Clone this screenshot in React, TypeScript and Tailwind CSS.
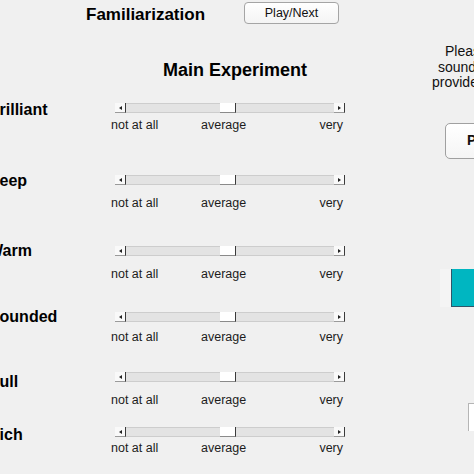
import React from "react";

type Row = {
  name: string;
  top: number; // margin above the slider
  labelShift: string; // negative margin on the bold label
  tickGap: string; // space between slider and tick labels
};

const ROWS: Row[] = [
  { name: "Brilliant", top: 22, labelShift: "-mt-[3px]", tickGap: "mt-[5px]" },
  { name: "Deep", top: 43, labelShift: "-mt-[4px]", tickGap: "mt-[11px]" },
  { name: "Warm", top: 36, labelShift: "-mt-[5px]", tickGap: "mt-[11px]" },
  { name: "Rounded", top: 31, labelShift: "-mt-[5px]", tickGap: "mt-[8px]" },
  { name: "Dull", top: 28, labelShift: "mt-0", tickGap: "mt-[11px]" },
  { name: "Rich", top: 20, labelShift: "-mt-[2px]", tickGap: "mt-[4px]" },
];

const ROW_TOPS: Record<number, string> = {
  22: "mt-[22px]",
  43: "mt-[43px]",
  36: "mt-[36px]",
  31: "mt-[31px]",
  28: "mt-[28px]",
  20: "mt-[20px]",
};

function Arrow({ dir }: { dir: "left" | "right" }) {
  return (
    <div className="flex h-[10px] w-[11px] shrink-0 items-center justify-center border-b border-r border-b-[#9a9a9a] border-r-[#3a3a3a] bg-[#f9f9f9]">
      <svg width="3" height="4" viewBox="0 0 3 4">
        {dir === "left" ? (
          <polygon points="3,0 0,2 3,4" fill="#222" />
        ) : (
          <polygon points="0,0 3,2 0,4" fill="#222" />
        )}
      </svg>
    </div>
  );
}

function Slider() {
  return (
    <div className="flex h-[10px] w-[230px]">
      <Arrow dir="left" />
      {/* track: left part, thumb, right part */}
      <div className="flex flex-1 border-y border-[#cdcdcd] bg-[#e3e3e3]">
        <div className="w-[94px]" />
        <div className="-my-px w-[16px] border-b border-r border-b-[#8a8a8a] border-r-[#3a3a3a] bg-white" />
        <div className="flex-1" />
      </div>
      <Arrow dir="right" />
    </div>
  );
}

function RatingRow({ row }: { row: Row }) {
  return (
    <div className={`flex items-start ${ROW_TOPS[row.top]}`}>
      <div
        className={`-ml-[12px] w-[127px] shrink-0 text-[16px] font-bold leading-[20px] text-black ${row.labelShift}`}
      >
        {row.name}
      </div>
      <div className="flex flex-col">
        <Slider />
        <div
          className={`-ml-[4px] flex w-[232px] text-[12.5px] leading-[14px] text-[#1c1c1c] ${row.tickGap}`}
        >
          <span className="w-[90px]">not at all</span>
          <span>average</span>
          <span className="ml-auto">very</span>
        </div>
      </div>
    </div>
  );
}

export default function App() {
  return (
    <div
      className="flex h-[474px] w-[474px] overflow-hidden bg-[#f0f0f0] text-black"
      style={{ fontFamily: '"Liberation Sans", Arial, Helvetica, sans-serif' }}
    >
      {/* Left: experiment panel */}
      <div className="flex w-[360px] shrink-0 flex-col">
        <div className="flex items-start">
          <div className="ml-[86px] mt-[5px] text-[17px] font-bold leading-[20px]">
            Familiarization
          </div>
          <button className="ml-[39px] mt-[2px] flex h-[22px] w-[95px] items-center justify-center rounded-[4px] border border-[#a5a5a5] bg-gradient-to-b from-white to-[#f4f4f4] text-[12.5px] leading-none text-[#111]">
            Play/Next
          </button>
        </div>

        <div className="ml-[163px] mt-[34px] text-[18px] font-bold leading-[22px]">
          Main Experiment
        </div>

        {ROWS.map((r) => (
          <RatingRow key={r.name} row={r} />
        ))}
      </div>

      {/* Right: instructions and controls, clipped by the window */}
      <div className="flex w-[200px] shrink-0 flex-col">
        <div className="mt-[44px] whitespace-nowrap text-[14px] leading-[15.5px] text-[#111]">
          <div className="pl-[85px]">Please rate each</div>
          <div className="pl-[78px]">sound using the</div>
          <div className="pl-[72px]">provided sliders</div>
        </div>

        <button className="ml-[85px] mt-[32px] flex h-[36px] w-[90px] items-center rounded-[5px] border border-[#a0a0a0] bg-gradient-to-b from-white to-[#f5f5f5] pl-[21px] text-[14px] font-bold text-[#111]">
          Play
        </button>

        <div className="ml-[80px] mt-[110px] flex h-[38px] w-[100px] bg-[#f4f4f4] pl-[11px]">
          <div className="flex-1 border-b border-l border-[#2f5568] bg-[#00b6c1]" />
        </div>

        <div className="ml-[108px] mt-[96px] h-[28px] w-[60px] border-l border-t border-[#b5b5b5] bg-white" />
      </div>
    </div>
  );
}
